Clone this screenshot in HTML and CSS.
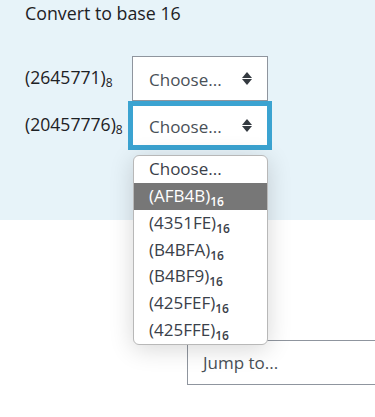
FILE: index.html
```html
<!DOCTYPE html>
<html>
<head>
<meta charset="utf-8">
<link rel="stylesheet" href="styles.css">
</head>
<body>
<div class="page">
  <section class="question">
    <p class="prompt">Convert to base 16</p>
    <div class="rows">
      <div class="label">(2645771)<sub>8</sub></div>
      <div class="select">
        <span>Choose...</span>
        <svg class="caret" width="10" height="13" viewBox="0 0 10 13"><polygon points="0,6 5,0 10,6" /><polygon points="0,7 5,13 10,7" /></svg>
      </div>
      <div class="label">(20457776)<sub>8</sub></div>
      <div class="select focused">
        <span>Choose...</span>
        <svg class="caret" width="10" height="13" viewBox="0 0 10 13"><polygon points="0,6 5,0 10,6" /><polygon points="0,7 5,13 10,7" /></svg>
      </div>
    </div>
  </section>
  <div class="nav">
    <div class="jump">Jump to...</div>
  </div>
  <ul class="dropdown">
    <li>Choose...</li>
    <li class="active">(AFB4B)<sub>16</sub></li>
    <li>(4351FE)<sub>16</sub></li>
    <li>(B4BFA)<sub>16</sub></li>
    <li>(B4BF9)<sub>16</sub></li>
    <li>(425FEF)<sub>16</sub></li>
    <li>(425FFE)<sub>16</sub></li>
  </ul>
</div>
</body>
</html>
```
FILE: styles.css
```css
* { box-sizing: border-box; }
html, body { margin: 0; padding: 0; background: #fff; }
body {
  font-family: "Open Sans", "Noto Sans", sans-serif;
  color: #1d2125;
  width: 375px;
  height: 417px;
  overflow: hidden;
}
.page { position: relative; height: 417px; }
.question {
  background: #e7f3f9;
  height: 220px;
  padding: 0 0 0 25px;
}
.prompt {
  margin: 0;
  padding-top: 1px;
  font-size: 17.8px;
  line-height: 24px;
}
.rows {
  display: grid;
  grid-template-columns: 107px 136px;
  row-gap: 4px;
  margin-top: 31px;
  align-items: center;
}
.label {
  font-size: 17.6px;
  line-height: 22px;
  padding-bottom: 4px;
  white-space: nowrap;
}
.label sub { font-size: 12px; vertical-align: -3px; line-height: 0; }
.select {
  height: 45px;
  border: 1px solid #8f959e;
  background: #fff;
  display: flex;
  align-items: center;
  justify-content: space-between;
  padding: 0 15px 0 16px;
  color: #495057;
  font-size: 17px;
}
.select span { margin-top: 1px; }
.select.focused {
  height: 41px;
  border-color: #3ba3d1;
  outline: 4px solid #3ba3d1;
}
.caret { fill: #343a40; }
.nav {
  padding: 120px 0 0 187px;
}
.jump {
  width: 200px;
  height: 45px;
  border: 1px solid #8f959e;
  border-right: none;
  padding-left: 15px;
  display: flex;
  align-items: center;
  color: #495057;
  font-size: 17px;
}
.dropdown {
  position: absolute;
  left: 133px;
  top: 155px;
  width: 135px;
  margin: 0;
  padding: 0;
  list-style: none;
  background: #fff;
  border: 1px solid #b8b8b8;
  border-radius: 6px;
  overflow: hidden;
  box-shadow: 0 4px 24px rgba(0,0,0,0.16);
}
.dropdown li {
  height: 26.85px;
  line-height: 26px;
  padding-left: 15px;
  font-size: 17px;
  color: #3a4049;
  white-space: nowrap;
}
.dropdown li.active { background: #777; color: #fff; }
.dropdown sub {
  font-size: 12px;
  font-weight: 600;
  vertical-align: -4px;
  line-height: 0;
}
```
